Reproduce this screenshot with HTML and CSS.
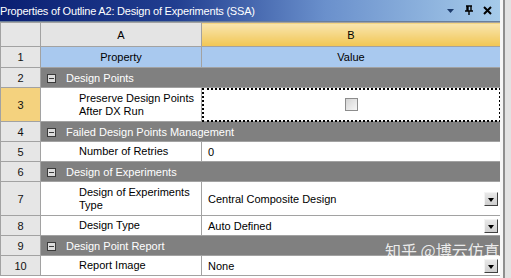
FILE: index.html
```html
<!DOCTYPE html>
<html>
<head>
<meta charset="utf-8">
<link rel="stylesheet" href="styles.css">
</head>
<body>
<div class="window">
  <div class="main">
    <div class="titlebar">
      <span class="title">Properties of Outline A2: Design of Experiments (SSA)</span>
      <div class="tbtns">
        <svg width="9" height="6" viewBox="0 0 9 6"><path d="M1 1 H8 L4.5 5 Z" fill="#1c3a6a"/></svg>
        <svg width="10" height="11" viewBox="0 0 10 11"><path d="M2 1 H8 M3 1 V6 M7 1 V6 M1 6 H9 M5 6 V10 M4 1 V6" stroke="#000" stroke-width="1.4" fill="none"/></svg>
        <svg width="9" height="9" viewBox="0 0 9 9"><path d="M1 1 L8 8 M8 1 L1 8" stroke="#000" stroke-width="2"/></svg>
      </div>
    </div>
    <table class="grid">
      <colgroup><col class="c-num"><col class="c-a"><col class="c-b"></colgroup>
      <tr class="r-head">
        <td class="num"></td>
        <td class="head-a">A</td>
        <td class="head-b">B</td>
      </tr>
      <tr class="r-1">
        <td class="num">1</td>
        <td class="hdr">Property</td>
        <td class="hdr">Value</td>
      </tr>
      <tr class="r-g">
        <td class="num">2</td>
        <td class="group" colspan="2"><span class="minus"></span>Design Points</td>
      </tr>
      <tr class="r-2l">
        <td class="num sel">3</td>
        <td class="prop">Preserve Design Points<br>After DX Run</td>
        <td class="val focus"><span class="check"></span></td>
      </tr>
      <tr class="r-g">
        <td class="num">4</td>
        <td class="group" colspan="2"><span class="minus"></span>Failed Design Points Management</td>
      </tr>
      <tr class="r-n">
        <td class="num">5</td>
        <td class="prop">Number of Retries</td>
        <td class="val">0</td>
      </tr>
      <tr class="r-g">
        <td class="num">6</td>
        <td class="group" colspan="2"><span class="minus"></span>Design of Experiments</td>
      </tr>
      <tr class="r-2l">
        <td class="num">7</td>
        <td class="prop">Design of Experiments<br>Type</td>
        <td class="val"><div class="dd"><span>Central Composite Design</span><span class="ddbtn"></span></div></td>
      </tr>
      <tr class="r-n">
        <td class="num">8</td>
        <td class="prop">Design Type</td>
        <td class="val"><div class="dd"><span>Auto Defined</span><span class="ddbtn"></span></div></td>
      </tr>
      <tr class="r-g">
        <td class="num">9</td>
        <td class="group" colspan="2"><span class="minus"></span>Design Point Report</td>
      </tr>
      <tr class="r-n">
        <td class="num">10</td>
        <td class="prop">Report Image</td>
        <td class="val"><div class="dd"><span>None</span><span class="ddbtn"></span></div></td>
      </tr>
    </table>
  </div>
  <div class="edge"></div>
  <div class="watermark">知乎 @博云仿真</div>
</div>
</body>
</html>
```

FILE: styles.css
```css
html, body {
  margin: 0;
  padding: 0;
  background: #ffffff;
}
body {
  font-family: "Liberation Sans", Arial, sans-serif;
  font-size: 11px;
  color: #000;
}
.window {
  position: relative;
  display: flex;
  width: 511px;
  height: 278px;
  overflow: hidden;
}
.main {
  width: 500px;
  flex: none;
  display: flex;
  flex-direction: column;
}
.edge {
  flex: 1;
  background: linear-gradient(to right, #f6f6f6 0 3px, #8e8e8e 3px 5px, #e2e2e2 5px);
}
.titlebar {
  height: 22px;
  flex: none;
  display: flex;
  align-items: center;
  justify-content: space-between;
  background: linear-gradient(to right, #0a1f72 0%, #213e90 35%, #6a90cc 65%, #a6cbea 100%);
  border-bottom: 1px solid #6b7f9a;
  box-sizing: border-box;
}
.title {
  color: #fff;
  font-size: 11px;
  letter-spacing: -0.2px;
  padding-left: 0;
  white-space: nowrap;
}
.tbtns {
  display: flex;
  align-items: center;
  gap: 9px;
  padding-right: 8px;
}
.grid {
  border-collapse: collapse;
  table-layout: fixed;
  width: 500px;
}
.c-num { width: 40px; }
.c-a { width: 161px; }
.c-b { width: 299px; }
.grid td {
  border: 1px solid #a2a2a2;
  padding: 0;
  vertical-align: middle;
  white-space: nowrap;
}
.r-head { height: 24px; }
.r-1 { height: 21px; }
.r-g { height: 20px; }
.r-n { height: 20px; }
.r-2l { height: 34px; }
.num {
  background: #e6e6e6;
  text-align: center;
  color: #111;
}
.num.sel { background: #f4d27e; }
.head-a {
  background: #e4e4e4;
  text-align: center;
}
.head-b {
  background: linear-gradient(to bottom, #f9e6b0, #f1c653);
  text-align: center;
}
.hdr {
  background: #a9c9ef;
  text-align: center;
}
.group {
  background: #808080;
  color: #fff;
  padding-left: 6px !important;
}
.minus {
  display: inline-block;
  width: 9px;
  height: 9px;
  box-sizing: border-box;
  border: 1px solid #3a3a3a;
  background: linear-gradient(#3a3a3a, #3a3a3a) center / 5px 1px no-repeat, #dcdcdc;
  vertical-align: -1px;
  margin-right: 10px;
}
.prop {
  padding-left: 38px !important;
  line-height: 13px;
}
.val {
  padding-left: 6px !important;
}
.focus {
  outline: 2px dotted #000;
  outline-offset: -2px;
  text-align: center;
  padding-left: 0 !important;
}
.check {
  display: inline-block;
  width: 13px;
  height: 13px;
  box-sizing: border-box;
  border: 1px solid #8c8c8c;
  background: linear-gradient(135deg, #d4d4d4, #f6f6f6);
  vertical-align: middle;
}
.dd {
  display: flex;
  align-items: center;
  justify-content: space-between;
  padding-right: 2px;
}
.ddbtn {
  width: 14px;
  height: 14px;
  box-sizing: border-box;
  border-top: 1px solid #f4f4f4;
  border-left: 1px solid #f4f4f4;
  border-right: 1px solid #404040;
  border-bottom: 1px solid #404040;
  background: linear-gradient(#e8e8e8, #cfcfcf);
  position: relative;
}
.ddbtn::after {
  content: "";
  position: absolute;
  left: 3px;
  top: 5px;
  border-left: 3.5px solid transparent;
  border-right: 3.5px solid transparent;
  border-top: 4px solid #000;
}
.watermark {
  position: absolute;
  left: 385px;
  top: 237px;
  font-family: "Noto Sans CJK SC", sans-serif;
  font-size: 16px;
  line-height: 26px;
  color: rgba(255, 255, 255, 0.85);
  white-space: nowrap;
}
```
